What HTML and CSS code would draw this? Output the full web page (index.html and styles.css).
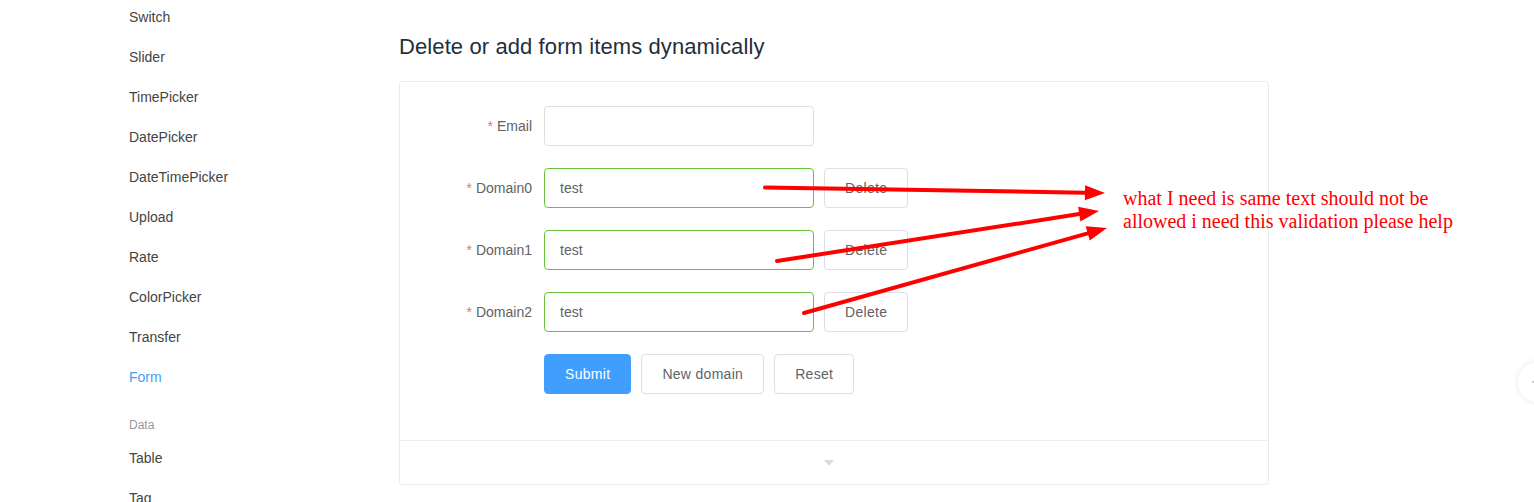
FILE: index.html
```html
<!DOCTYPE html>
<html>
<head>
<meta charset="utf-8">
<link rel="stylesheet" href="styles.css">
</head>
<body>
<div class="page">
  <nav class="sidebar">
    <ul class="nav-list">
      <li class="nav-item">Switch</li>
      <li class="nav-item">Slider</li>
      <li class="nav-item">TimePicker</li>
      <li class="nav-item">DatePicker</li>
      <li class="nav-item">DateTimePicker</li>
      <li class="nav-item">Upload</li>
      <li class="nav-item">Rate</li>
      <li class="nav-item">ColorPicker</li>
      <li class="nav-item">Transfer</li>
      <li class="nav-item active">Form</li>
    </ul>
    <div class="nav-group">Data</div>
    <ul class="nav-list">
      <li class="nav-item">Table</li>
      <li class="nav-item">Tag</li>
    </ul>
  </nav>
  <main class="main">
    <h3 class="title">Delete or add form items dynamically</h3>
    <div class="demo-block">
      <div class="source">
        <div class="form-item">
          <label class="label"><span class="req">*</span>Email</label>
          <div class="input"></div>
        </div>
        <div class="form-item">
          <label class="label"><span class="req">*</span>Domain0</label>
          <div class="input success">test</div>
          <button class="btn">Delete</button>
        </div>
        <div class="form-item">
          <label class="label"><span class="req">*</span>Domain1</label>
          <div class="input success">test</div>
          <button class="btn">Delete</button>
        </div>
        <div class="form-item">
          <label class="label"><span class="req">*</span>Domain2</label>
          <div class="input success">test</div>
          <button class="btn">Delete</button>
        </div>
        <div class="form-item actions">
          <button class="btn primary">Submit</button>
          <button class="btn">New domain</button>
          <button class="btn">Reset</button>
        </div>
      </div>
      <div class="control"><span class="caret"></span></div>
    </div>
  </main>
</div>

<div class="backtop"><span class="backtop-dot"></span></div>

<svg class="annot" width="1534" height="502" viewBox="0 0 1534 502">
  <g stroke="#fe0000" stroke-width="4" stroke-linecap="round" fill="none">
    <line x1="765" y1="187.5" x2="1085" y2="192.7"/>
    <line x1="777" y1="261" x2="1079.2" y2="214.1"/>
    <line x1="804" y1="313" x2="1087.7" y2="233.4"/>
  </g>
  <g fill="#fe0000">
    <polygon points="1105,193 1084.9,200.2 1085.1,185.2"/>
    <polygon points="1099,211 1080.4,221.5 1078.1,206.7"/>
    <polygon points="1107,228 1089.8,240.6 1085.7,226.2"/>
  </g>
</svg>
<div class="note">what I need is same text should not be<br>allowed i need this validation please help</div>
</body>
</html>
```

FILE: styles.css
```css
* { box-sizing: border-box; }
html, body {
  margin: 0;
  padding: 0;
  background: #fff;
  overflow: hidden;
}
body {
  width: 1534px;
  height: 502px;
  position: relative;
  font-family: "Liberation Sans", Arial, Helvetica, sans-serif;
  color: #606266;
}
.page {
  display: flex;
  align-items: flex-start;
}
.sidebar {
  width: 399px;
  padding-left: 129px;
  flex: none;
}
.nav-list {
  list-style: none;
  margin: 0;
  padding: 0;
}
.nav-list:first-child { margin-top: -3px; }
.nav-item {
  font-size: 14px;
  line-height: 40px;
  height: 40px;
  color: #444;
}
.nav-item.active { color: #409eff; }
.nav-group {
  margin-top: 15px;
  font-size: 12px;
  line-height: 26px;
  color: #999;
}
.main {
  width: 870px;
  flex: none;
}
.title {
  margin: 32px 0 19px;
  font-size: 22px;
  line-height: 30px;
  font-weight: 400;
  letter-spacing: 0.1px;
  color: #1f2f3d;
}
.demo-block {
  border: 1px solid #ebebeb;
  border-radius: 3px;
}
.source {
  padding: 24px;
}
.form-item {
  display: flex;
  align-items: center;
  margin-bottom: 22px;
}
.label {
  width: 120px;
  padding-right: 12px;
  text-align: right;
  font-size: 14px;
  line-height: 40px;
  color: #606266;
}
.req {
  color: #f56c6c;
  margin-right: 4px;
}
.input {
  width: 270px;
  height: 40px;
  border: 1px solid #dcdfe6;
  border-radius: 4px;
  padding: 0 15px;
  font-size: 14px;
  line-height: 38px;
  color: #606266;
}
.input.success { border-color: #67c23a; }
.btn {
  height: 40px;
  padding: 0 20px;
  margin-left: 10px;
  border: 1px solid #dcdfe6;
  border-radius: 4px;
  background: #fff;
  font-family: "Liberation Sans", Arial, Helvetica, sans-serif;
  font-size: 14px;
  font-weight: 500;
  letter-spacing: 0.3px;
  color: #606266;
}
.actions { padding-left: 120px; }
.actions .btn:first-child { margin-left: 0; }
.btn.primary {
  background: #409eff;
  border-color: #409eff;
  color: #fff;
}
.control {
  height: 44px;
  border-top: 1px solid #eaeefb;
  display: flex;
  align-items: center;
  justify-content: center;
  padding-right: 11px;
}
.caret {
  width: 0;
  height: 0;
  border-top: 6px solid #d3dce6;
  border-left: 5px solid transparent;
  border-right: 5px solid transparent;
}
.backtop {
  position: absolute;
  left: 1518px;
  top: 362px;
  width: 40px;
  height: 40px;
  border-radius: 50%;
  background: #fff;
  box-shadow: 0 0 6px rgba(0, 0, 0, 0.1);
}
.backtop-dot {
  position: absolute;
  left: 14px;
  top: 19px;
  width: 2px;
  height: 2px;
  background: #ccc;
}
.annot {
  position: absolute;
  left: 0;
  top: 0;
  pointer-events: none;
}
.note {
  position: absolute;
  left: 1123px;
  top: 187px;
  font-family: "Liberation Serif", "Times New Roman", serif;
  font-size: 20px;
  line-height: 23px;
  color: #fe0000;
  white-space: nowrap;
}
```
